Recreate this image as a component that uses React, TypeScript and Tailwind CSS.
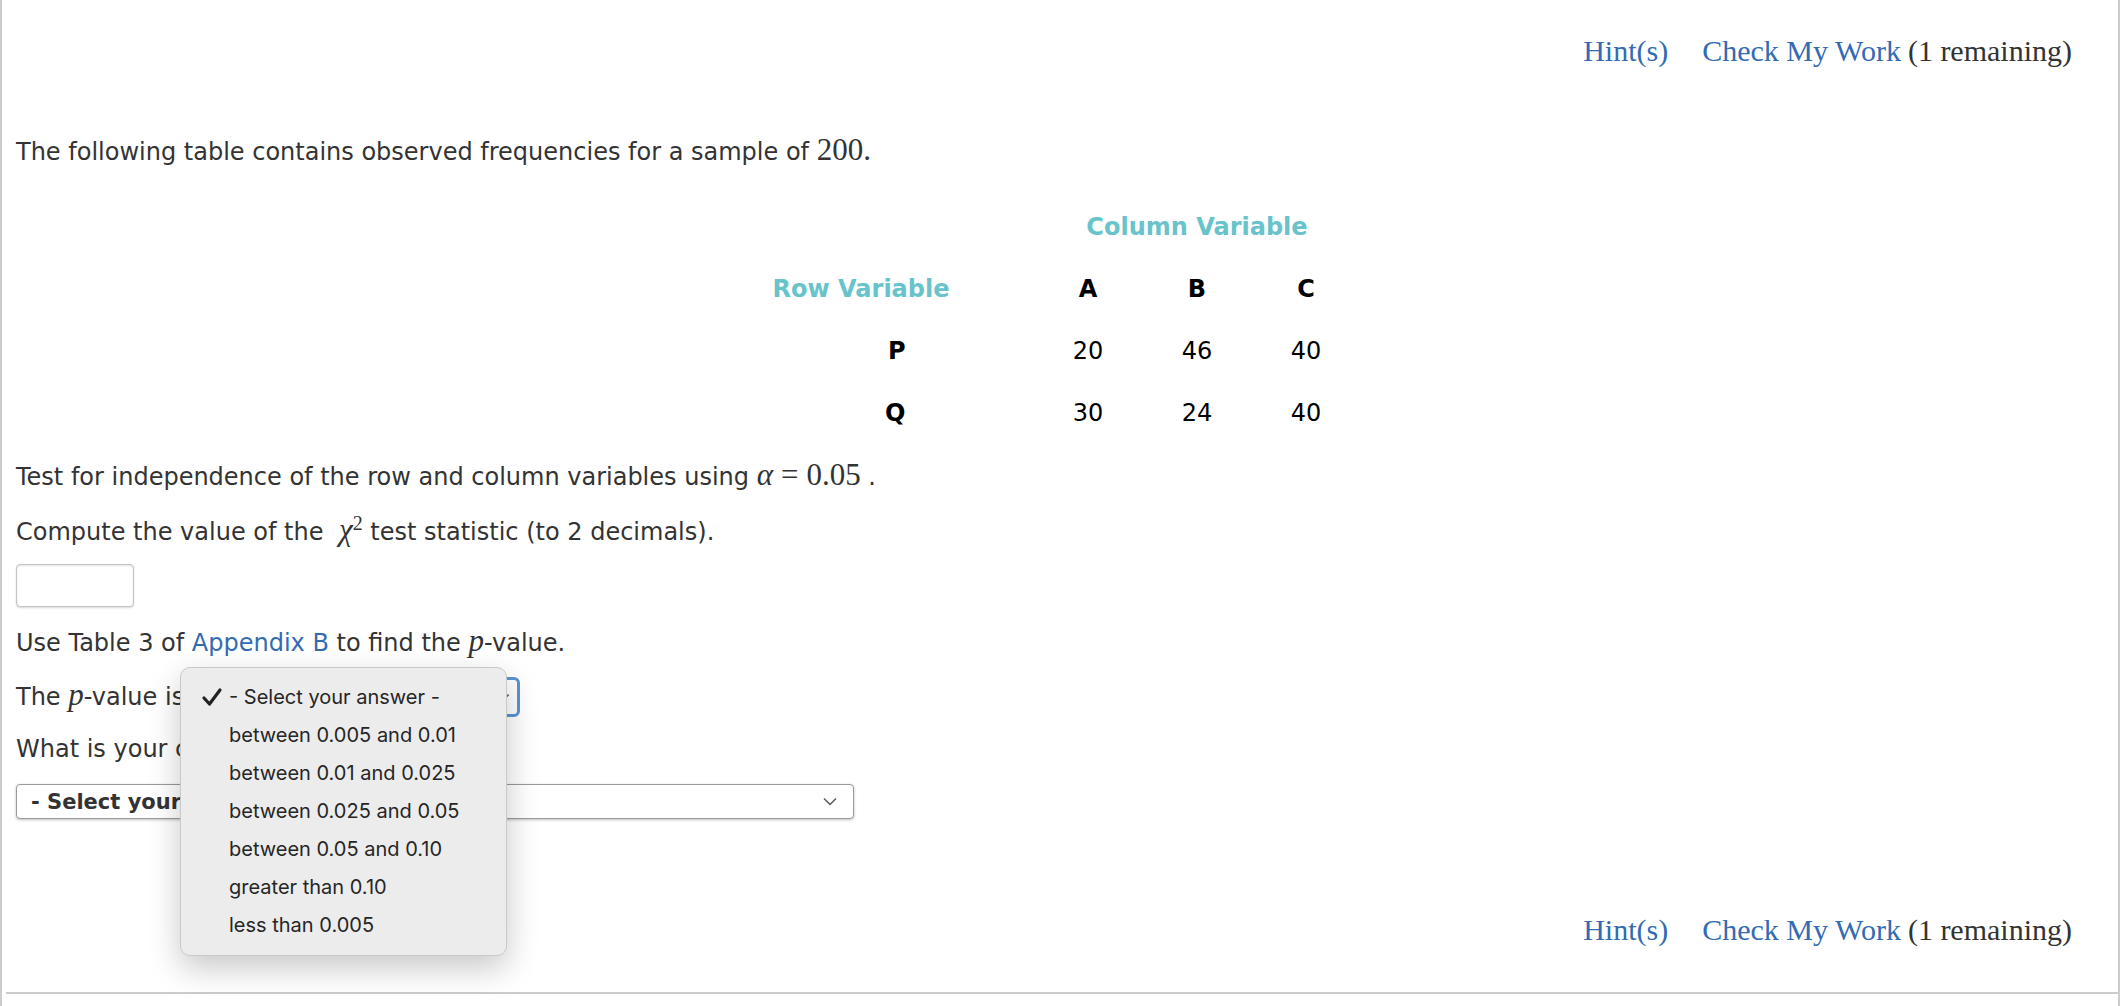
const menuItems = [
  "- Select your answer -",
  "between 0.005 and 0.01",
  "between 0.01 and 0.025",
  "between 0.025 and 0.05",
  "between 0.05 and 0.10",
  "greater than 0.10",
  "less than 0.005",
];

const tableRows = [
  { label: "P", values: [20, 46, 40] },
  { label: "Q", values: [30, 24, 40] },
];

function HintBar() {
  return (
    <div className="flex justify-end pr-[46px] font-['Liberation_Serif',serif] text-[30px] leading-[36px]">
      <span className="text-[#336bb3]">Hint(s)</span>
      <span className="ml-[34px] text-[#336bb3]">Check My Work</span>
      <span className="ml-[7px] text-[#333333]">(1 remaining)</span>
    </div>
  );
}

function Chevron() {
  return (
    <svg width="14" height="9" viewBox="0 0 14 9" fill="none">
      <path d="M1 1.5 L7 7.5 L13 1.5" stroke="#555555" strokeWidth="1.4" />
    </svg>
  );
}

function Check() {
  return (
    <svg width="22" height="20" viewBox="0 0 22 20" fill="none">
      <path d="M3 11 L8.5 17 L19 3" stroke="#222222" strokeWidth="3.2" strokeLinecap="round" strokeLinejoin="round" />
    </svg>
  );
}

// math bits are set in a serif at a larger size, without growing the line box
function Mi({ children }: { children: React.ReactNode }) {
  return <span className="font-['Liberation_Serif',serif] italic text-[31px] leading-[0]">{children}</span>;
}

function Mn({ children }: { children: React.ReactNode }) {
  return <span className="font-['Liberation_Serif',serif] text-[31px] leading-[0]">{children}</span>;
}

export default function App() {
  return (
    <div className="relative w-full h-[1006px] overflow-hidden bg-white font-['DejaVu_Sans',sans-serif] text-[#333333]">
      <div className="flex h-full flex-col border-l-2 border-r-2 border-[#cccccc]">
        <div className="pt-[33px]">
          <HintBar />
        </div>

        <p className="mt-[69px] pl-[14px] text-[24px] leading-[28px]">
          The following table contains observed frequencies for a sample of <Mn>200.</Mn>
        </p>

        {/* contingency table */}
        <div className="mx-auto mt-[30px] w-fit text-[24px] text-black">
          <div className="flex h-[62px] items-center">
            <div className="w-[274px]" />
            <div className="w-[327px] text-center font-bold text-[#68c3cb]">Column Variable</div>
          </div>
          <div className="flex h-[62px] items-center font-bold">
            <div className="w-[274px] pr-[84px] text-right text-[#68c3cb]">Row Variable</div>
            {["A", "B", "C"].map((c) => (
              <div key={c} className="w-[109px] text-center">
                {c}
              </div>
            ))}
          </div>
          {tableRows.map((row) => (
            <div key={row.label} className="flex h-[62px] items-center">
              <div className="w-[274px] pr-[128px] text-right font-bold">{row.label}</div>
              {row.values.map((v, i) => (
                <div key={i} className="w-[109px] text-center">
                  {v}
                </div>
              ))}
            </div>
          ))}
        </div>

        <div className="pl-[14px] text-[24px] leading-[28px]">
          <p className="mt-[19px]">
            Test for independence of the row and column variables using <Mi>α</Mi>
            <Mn>
              <span className="mx-[8px]">=</span>0.05
            </Mn>{" "}
            .
          </p>
          <p className="mt-[27px]">
            Compute the value of the{" "}
            <Mi>
              <span className="ml-[8px]">χ</span>
              <sup className="not-italic text-[20px] leading-[0]">2</sup>
            </Mi>{" "}
            test statistic (to 2 decimals).
          </p>
          <div className="mt-[18px] h-[43px] w-[118px] rounded-[4px] border border-[#c4c4c4] bg-white shadow-[inset_0_1px_2px_rgba(0,0,0,0.12),0_1px_2px_rgba(0,0,0,0.15)]" />
          <p className="mt-[22px]">
            Use Table 3 of <span className="text-[#336bb3]">Appendix B</span> to find the <Mi>p</Mi>-value.
          </p>
          <div className="mt-[20px] flex h-[40px] items-center">
            <span>
              The <Mi>p</Mi>-value is
            </span>
            <div className="ml-[8px] flex h-[40px] w-[328px] items-center justify-between rounded-[6px] border-[3px] border-[#5b93d6] bg-white pl-[12px] pr-[8px] font-bold">
              <span>- Select your answer -</span>
              <Chevron />
            </div>
          </div>
          <p className="mt-[18px]">What is your conclusion?</p>
          <div className="mt-[21px] flex h-[35px] w-[838px] items-center justify-between rounded-[4px] border border-[#9a9a9a] bg-white pl-[14px] pr-[16px] text-[21px] font-bold text-[#333333] shadow-[0_1px_3px_rgba(0,0,0,0.25)]">
            <span>- Select your answer -</span>
            <Chevron />
          </div>
        </div>

        <div className="mt-auto">
          <HintBar />
        </div>
        <div className="ml-[4px] mt-[44px] mb-[12px] h-[2px] bg-[#cccccc]" />
      </div>

      {/* open select popup */}
      <div className="absolute left-[180px] top-[667px] w-[327px] rounded-[10px] border border-[#c9c9c9] bg-[#ececec] pt-[10px] pb-[11px] font-['Inter',sans-serif] text-[20px] text-[#262626] shadow-[0_12px_32px_rgba(0,0,0,0.22)]">
        {menuItems.map((item, i) => (
          <div key={item} className="flex h-[38px] items-center">
            <div className="flex w-[48px] justify-end pr-[6px]">{i === 0 && <Check />}</div>
            <span>{item}</span>
          </div>
        ))}
      </div>
    </div>
  );
}
